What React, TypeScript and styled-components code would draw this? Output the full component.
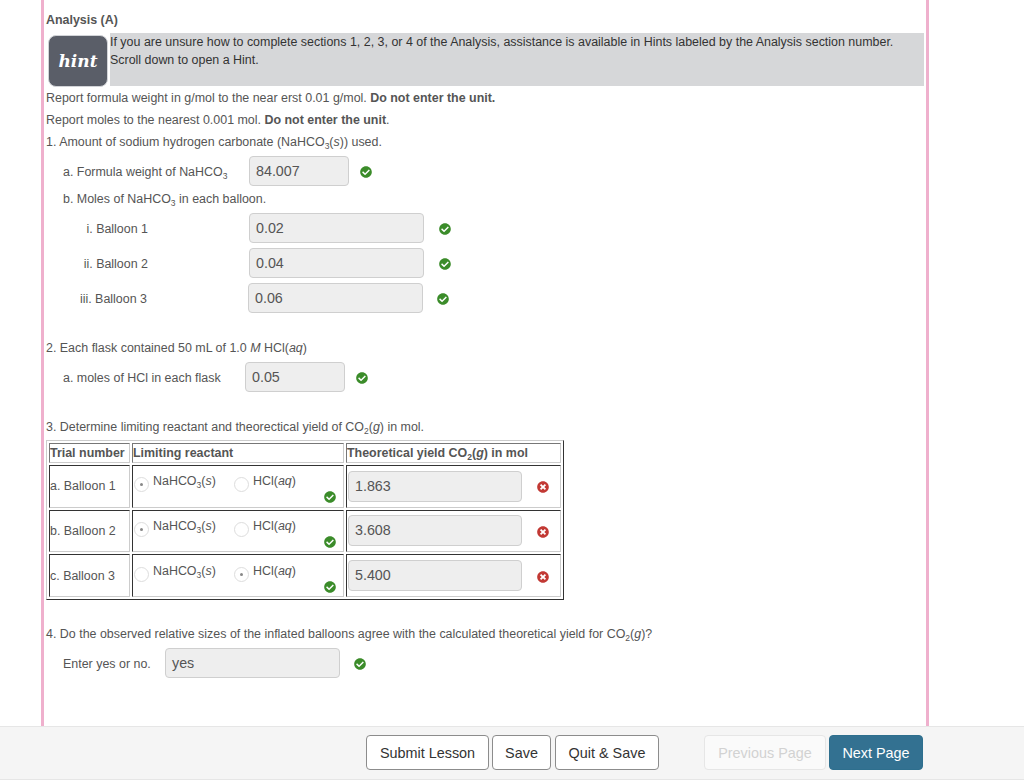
import styled, { createGlobalStyle } from 'styled-components';
import { FaCheckCircle, FaTimesCircle } from 'react-icons/fa';

const GlobalStyle = createGlobalStyle`
  html, body {
    margin: 0;
    padding: 0;
    background: #fff;
  }
  body {
    width: 1024px;
    height: 780px;
    overflow: hidden;
    font-family: "Liberation Sans", Arial, sans-serif;
    font-size: 12.44px;
    color: #555;
  }
  sub {
    font-size: 8.5px;
    line-height: 0;
  }
`;

const Page = styled.div`
  display: flex;
  flex-direction: column;
  height: 780px;
`;

const Lesson = styled.main`
  box-sizing: border-box;
  width: 888px;
  height: 726px;
  margin-left: 41px;
  padding-left: 2px;
  border-left: 3px solid #efb0cd;
  border-right: 3px solid #efb0cd;
`;

const Title = styled.div`
  padding-top: 11px;
  margin-bottom: 4px;
  line-height: 18px;
  font-weight: bold;
`;

const HintRow = styled.div`
  display: flex;
  height: 53px;
  margin-right: 2px;
  margin-bottom: 1px;
`;

const HintLogo = styled.div`
  flex: 0 0 60px;
  height: 52px;
  margin: 2px 2px 0 2px;
  border: 1px solid #d2d4d8;
  border-radius: 8px;
  box-sizing: border-box;
  background: #5a5e68;
  color: #fff;
  font-family: "DejaVu Serif", serif;
  font-style: italic;
  font-weight: bold;
  font-size: 17px;
  line-height: 50px;
  text-align: center;
`;

const HintText = styled.div`
  flex: 1;
  background: #d6d7d9;
  color: #333;
  line-height: 18px;
  white-space: nowrap;
`;

const Line = styled.div<{ $top?: number; $indent?: number }>`
  height: 22px;
  line-height: 23px;
  margin-top: ${(p) => p.$top ?? 0}px;
  padding-left: ${(p) => p.$indent ?? 0}px;
  white-space: nowrap;
`;

const AnswerRow = styled.div<{ $top?: number }>`
  display: flex;
  align-items: center;
  height: 30px;
  margin-top: ${(p) => p.$top ?? 0}px;
`;

const AnswerLabel = styled.div<{ $width: number; $right?: boolean }>`
  box-sizing: border-box;
  flex: 0 0 ${(p) => p.$width}px;
  text-align: ${(p) => (p.$right ? 'right' : 'left')};
  white-space: nowrap;
  padding-top: 2px;
  padding-left: ${(p) => (p.$right ? 0 : 17)}px;
  margin-right: ${(p) => (p.$right ? 101 : 0)}px;
`;

const AnswerInput = styled.div<{ $width: number; $height?: number }>`
  box-sizing: border-box;
  width: ${(p) => p.$width}px;
  height: ${(p) => p.$height ?? 30}px;
  padding-left: 6px;
  border: 1px solid #cfcfcf;
  border-radius: 4px;
  background: #eee;
  font-size: 14.3px;
  line-height: 29px;
  color: #555;
`;

const Mark = styled.span<{ $gap?: number; $wrong?: boolean }>`
  display: inline-flex;
  margin-top: 2px;
  margin-left: ${(p) => p.$gap ?? 0}px;
  color: ${(p) => (p.$wrong ? '#c23934' : '#3b8c2a')};
  font-size: 12px;
`;

const TrialTable = styled.table`
  margin-top: 2px;
  border-collapse: separate;
  border-spacing: 2px;
  border: 1px solid;
  border-color: #ccc #333 #333 #ccc;
  table-layout: fixed;
  width: 518px;
  height: 160px;
`;

const Cell = styled.td`
  box-sizing: border-box;
  padding: 0;
  border: 1px solid;
  border-color: #333 #ccc #ccc #333;
  white-space: nowrap;
`;

const HeadCell = styled(Cell).attrs({ as: 'th' })`
  height: 20px;
  text-align: left;
  font-weight: bold;
  border-color: #777 #ccc #ccc #777;
`;

const ChoiceCell = styled.div`
  display: flex;
  flex-direction: column;
  height: 40px;
  padding-left: 1px;
`;

const Choices = styled.div`
  display: flex;
  align-items: flex-start;
  margin-top: 6px;
`;

const Choice = styled.span<{ $width: number }>`
  display: flex;
  flex: 0 0 ${(p) => p.$width}px;
  gap: 4px;
  line-height: 18px;
`;

const Radio = styled.span<{ $on?: boolean }>`
  box-sizing: border-box;
  display: flex;
  align-items: center;
  justify-content: center;
  width: 15px;
  height: 15px;
  margin-top: 5px;
  border: 1px solid #ddd;
  border-radius: 50%;
  background: #fff;
  &::after {
    content: '';
    display: ${(p) => (p.$on ? 'block' : 'none')};
    width: 3px;
    height: 3px;
    border-radius: 50%;
    background: #888;
  }
`;

const ChoiceMark = styled.div`
  display: flex;
  justify-content: flex-end;
  margin-top: -3px;
  padding-right: 7px;
`;

const YieldCell = styled.div`
  display: flex;
  align-items: center;
  padding-left: 1px;
`;

const Footer = styled.footer`
  box-sizing: border-box;
  display: flex;
  align-items: center;
  height: 54px;
  padding: 0 100px 1px 366px;
  background: #f5f5f5;
  border-top: 1px solid #e6e6e6;
  border-bottom: 1px solid #e6e6e6;
`;

const Button = styled.button<{ $primary?: boolean; $disabled?: boolean; $gap?: number; $width: number }>`
  box-sizing: border-box;
  width: ${(p) => p.$width}px;
  height: 35px;
  margin-left: ${(p) => p.$gap ?? 0}px;
  padding: 0;
  border: 1px solid ${(p) => (p.$primary ? '#2e6f8e' : p.$disabled ? '#e6e6e6' : '#8c8c8c')};
  border-radius: 4px;
  background: ${(p) => (p.$primary ? '#337191' : p.$disabled ? '#fafafa' : '#fff')};
  color: ${(p) => (p.$primary ? '#fff' : p.$disabled ? '#d2d2d2' : '#333')};
  font-family: inherit;
  font-size: 14.4px;
`;

const NaHCO3 = () => (
  <>
    NaHCO<sub>3</sub>
  </>
);

const trials = [
  { name: 'a. Balloon 1', limiting: 'base', value: '1.863' },
  { name: 'b. Balloon 2', limiting: 'base', value: '3.608' },
  { name: 'c. Balloon 3', limiting: 'acid', value: '5.400' },
];

export default function App() {
  return (
    <Page>
      <GlobalStyle />
      <Lesson>
        <Title>Analysis (A)</Title>
        <HintRow>
          <HintLogo>hint</HintLogo>
          <HintText>
            If you are unsure how to complete sections 1, 2, 3, or 4 of the Analysis, assistance is available in Hints labeled by the Analysis section number.
            <br />
            Scroll down to open a Hint.
          </HintText>
        </HintRow>
        <Line>
          Report formula weight in g/mol to the near erst 0.01 g/mol. <b>Do not enter the unit.</b>
        </Line>
        <Line>
          Report moles to the nearest 0.001 mol. <b>Do not enter the unit</b>.
        </Line>
        <Line>
          1. Amount of sodium hydrogen carbonate (<NaHCO3 />(<i>s</i>)) used.
        </Line>
        <AnswerRow $top={3}>
          <AnswerLabel $width={203}>
            a. Formula weight of <NaHCO3 />
          </AnswerLabel>
          <AnswerInput $width={100}>84.007</AnswerInput>
          <Mark $gap={11}><FaCheckCircle /></Mark>
        </AnswerRow>
        <Line $top={2} $indent={17}>
          b. Moles of <NaHCO3 /> in each balloon.
        </Line>
        <AnswerRow $top={3}>
          <AnswerLabel $width={102} $right>i. Balloon 1</AnswerLabel>
          <AnswerInput $width={175}>0.02</AnswerInput>
          <Mark $gap={15}><FaCheckCircle /></Mark>
        </AnswerRow>
        <AnswerRow $top={5}>
          <AnswerLabel $width={102} $right>ii. Balloon 2</AnswerLabel>
          <AnswerInput $width={175}>0.04</AnswerInput>
          <Mark $gap={15}><FaCheckCircle /></Mark>
        </AnswerRow>
        <AnswerRow $top={5}>
          <AnswerLabel $width={101} $right>iii. Balloon 3</AnswerLabel>
          <AnswerInput $width={175}>0.06</AnswerInput>
          <Mark $gap={14}><FaCheckCircle /></Mark>
        </AnswerRow>
        <Line $top={24}>
          2. Each flask contained 50 mL of 1.0 <i>M</i> HCl(<i>aq</i>)
        </Line>
        <AnswerRow $top={3}>
          <AnswerLabel $width={199}>a. moles of HCl in each flask</AnswerLabel>
          <AnswerInput $width={100}>0.05</AnswerInput>
          <Mark $gap={11}><FaCheckCircle /></Mark>
        </AnswerRow>
        <Line $top={24}>
          3. Determine limiting reactant and theorectical yield of CO<sub>2</sub>(<i>g</i>) in mol.
        </Line>
        <TrialTable>
          <colgroup>
            <col width={81} />
            <col width={212} />
            <col width={215} />
          </colgroup>
          <thead>
            <tr>
              <HeadCell>Trial number</HeadCell>
              <HeadCell>Limiting reactant</HeadCell>
              <HeadCell>
                Theoretical yield CO<sub>2</sub>(<i>g</i>) in mol
              </HeadCell>
            </tr>
          </thead>
          <tbody>
            {trials.map((t) => (
              <tr key={t.name}>
                <Cell>{t.name}</Cell>
                <Cell>
                  <ChoiceCell>
                    <Choices>
                      <Choice $width={100}>
                        <Radio $on={t.limiting === 'base'} />
                        <span>
                          <NaHCO3 />(<i>s</i>)
                        </span>
                      </Choice>
                      <Choice $width={80}>
                        <Radio $on={t.limiting === 'acid'} />
                        <span>
                          HCl(<i>aq</i>)
                        </span>
                      </Choice>
                    </Choices>
                    <ChoiceMark>
                      <Mark><FaCheckCircle /></Mark>
                    </ChoiceMark>
                  </ChoiceCell>
                </Cell>
                <Cell>
                  <YieldCell>
                    <AnswerInput $width={174} $height={31}>{t.value}</AnswerInput>
                    <Mark $gap={15} $wrong><FaTimesCircle /></Mark>
                  </YieldCell>
                </Cell>
              </tr>
            ))}
          </tbody>
        </TrialTable>
        <Line $top={23}>
          4. Do the observed relative sizes of the inflated balloons agree with the calculated theoretical yield for CO<sub>2</sub>(<i>g</i>)?
        </Line>
        <AnswerRow $top={3}>
          <AnswerLabel $width={119}>Enter yes or no.</AnswerLabel>
          <AnswerInput $width={175}>yes</AnswerInput>
          <Mark $gap={14}><FaCheckCircle /></Mark>
        </AnswerRow>
      </Lesson>
      <Footer>
        <Button $width={123}>Submit Lesson</Button>
        <Button $width={59} $gap={3}>Save</Button>
        <Button $width={104} $gap={4}>Quit &amp; Save</Button>
        <Button $width={122} $gap={45} $disabled>Previous Page</Button>
        <Button $width={94} $gap={3} $primary>Next Page</Button>
      </Footer>
    </Page>
  );
}
